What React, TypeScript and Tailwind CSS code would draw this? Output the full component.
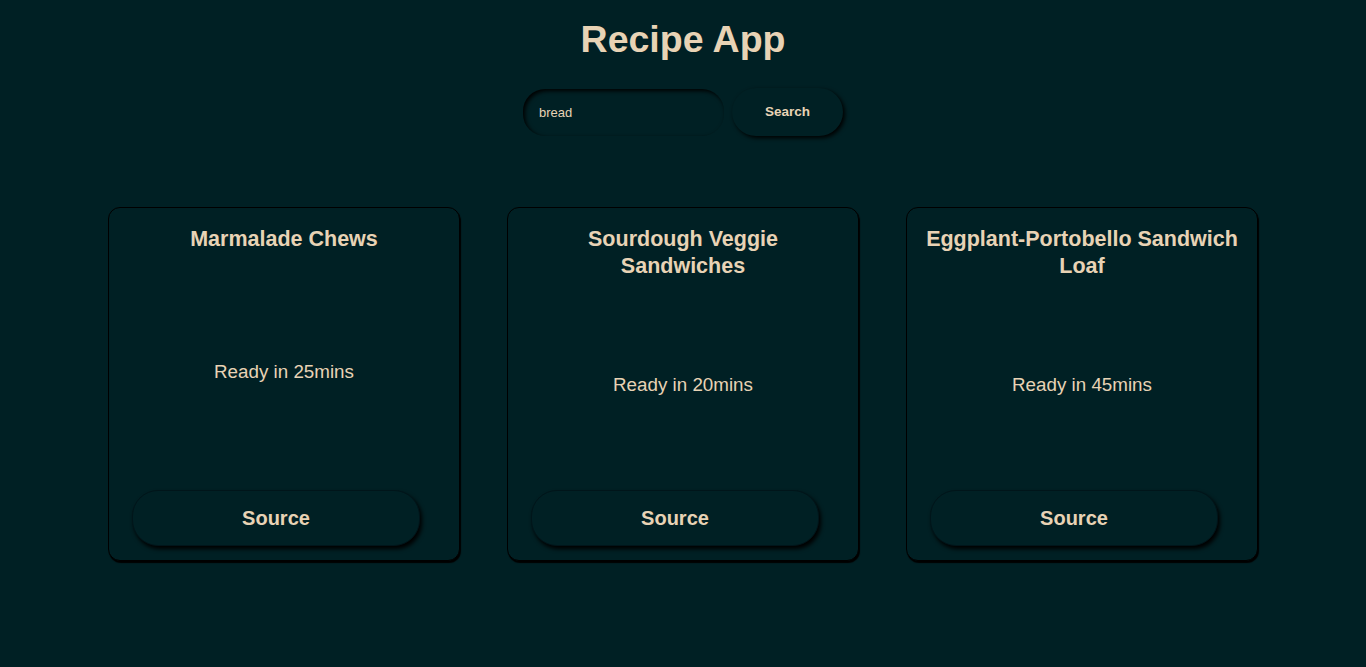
import React from "react";

const recipes = [
  { title: "Marmalade Chews", time: 25 },
  { title: "Sourdough Veggie Sandwiches", time: 20 },
  { title: "Eggplant-Portobello Sandwich Loaf", time: 45 },
];

export default function App() {
  return (
    <div
      className="min-h-[667px] w-full bg-[#002024] text-[#e8d3b5] flex flex-col items-center"
      style={{ fontFamily: '"Liberation Sans", Arial, sans-serif' }}
    >
      <h1 className="mt-[18px] text-[37.5px] font-bold leading-[43px]">Recipe App</h1>
      <div className="mt-[27px] flex items-center gap-2">
        <div className="w-[201px] h-[47px] rounded-[22px] bg-[#002024] shadow-[inset_2px_2px_4px_#000] flex items-center px-4 pt-[1px] text-[13px]">
          bread
        </div>
        <button className="w-[111px] h-[48px] rounded-[24px] bg-[#002024] shadow-[2px_2px_4px_#000] pt-[1px] text-[13.5px] font-bold text-[#e8d3b5]">
          Search
        </button>
      </div>
      <div className="mt-[71px] flex gap-[47px]">
        {recipes.map((r) => (
          <div
            key={r.title}
            className="w-[352px] h-[354px] rounded-[12px] border border-black shadow-[1px_2px_1px_#000] bg-[#002024] flex flex-col justify-between pt-[18px] pb-[14px] px-4"
          >
            <h2 className="text-center text-[21.5px] font-bold leading-[27px]">{r.title}</h2>
            <p className="text-center text-[18.8px] leading-[22px]">Ready in {r.time}mins</p>
            <button className="ml-[7px] w-[288px] h-[56px] rounded-[26px] bg-[#002024] shadow-[2px_3px_4px_#000] border border-[#00151a] text-[20px] font-bold text-[#e8d3b5]">
              Source
            </button>
          </div>
        ))}
      </div>
    </div>
  );
}
